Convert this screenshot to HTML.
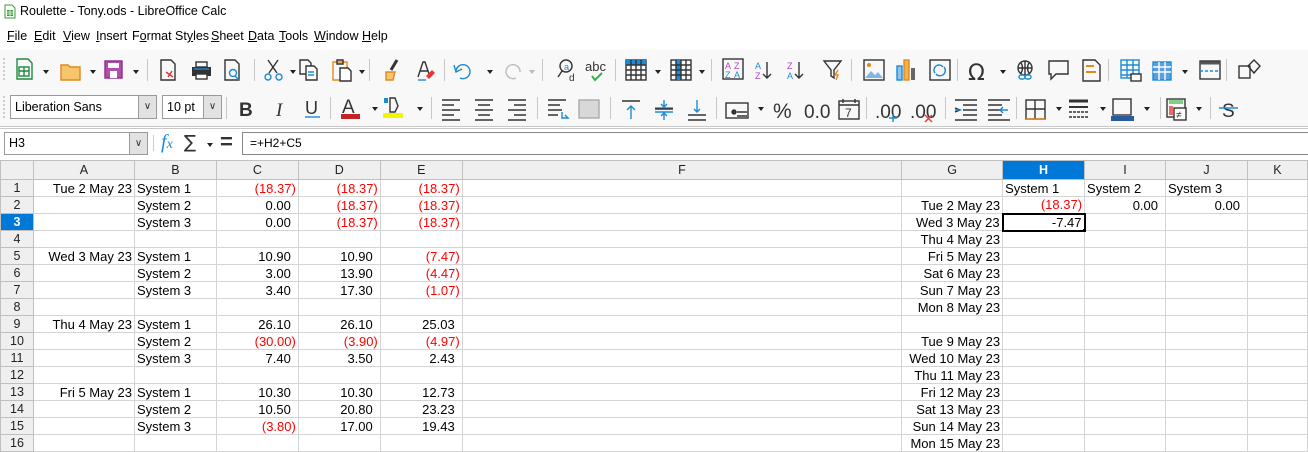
<!DOCTYPE html>
<html><head><meta charset="utf-8"><style>
*{margin:0;padding:0;box-sizing:border-box}
body{width:1308px;height:444px;overflow:hidden;background:#fff;font-family:"Liberation Sans",sans-serif;font-size:13px;color:#000;position:relative}
.abs{position:absolute}
#title{left:0;top:0;width:1308px;height:24px;background:#fff;font-family:"Liberation Sans",sans-serif;font-size:12.5px}
#menu{left:0;top:26px;height:22px;font-size:12.5px;font-family:"Liberation Sans",sans-serif}
#menu span{position:absolute;top:3px;white-space:nowrap}
#menu u{text-decoration:underline}
.tb{left:0;width:1308px;background:#f8f8f8}
.dd{position:absolute;width:0;height:0;border-left:3.5px solid transparent;border-right:3.5px solid transparent;border-top:4px solid #222}
.sep{position:absolute;width:1px;height:22px;background:#c8c8c8}
.box{position:absolute;background:#fff;border:1px solid #9a9a9a;height:24px;font-size:12.5px;line-height:22px;padding-left:4px}
.btn{position:absolute;right:0;top:0;width:18px;height:22px;background:#e2e2e2;border-left:1px solid #9a9a9a;font-size:10px;text-align:center;color:#333}
table{position:absolute;left:0;top:160px;border-collapse:collapse;table-layout:fixed;font-size:13px}
td{border:1px solid #d4d4d4;height:17px;line-height:15px;padding:0 2px;white-space:nowrap;overflow:hidden}
tr.h td{background:#efefef;text-align:center;color:#222;height:19px;border-color:#c0c0c0;font-size:12.5px}
td.rh{background:#efefef;text-align:center;color:#222;border-color:#c0c0c0;font-size:12.5px;padding:0}
.r{text-align:right}
.p{text-align:right;padding-right:7px}
.n{text-align:right;color:#f00}
.sel{background:#0078d7 !important;color:#fff !important;font-weight:bold}
</style></head><body>
<div id="title" class="abs">
<svg class="abs" style="left:4px;top:4px" width="12" height="15" viewBox="0 0 12 15"><path d="M1 1h7l3 3v10H1z" fill="#fff" stroke="#3a9a3a"/><rect x="3" y="6" width="6" height="6" fill="#3a9a3a"/><path d="M3 8h6M3 10h6M6 6v6" stroke="#fff" stroke-width=".7"/></svg>
<span class="abs" style="left:20px;top:4px">Roulette - Tony.ods - LibreOffice Calc</span></div>
<div id="menu" class="abs">
<span style="left:7px"><u>F</u>ile</span><span style="left:34px"><u>E</u>dit</span><span style="left:63px"><u>V</u>iew</span><span style="left:96px"><u>I</u>nsert</span><span style="left:132px">F<u>o</u>rmat</span><span style="left:175px">St<u>y</u>les</span><span style="left:211px"><u>S</u>heet</span><span style="left:248px"><u>D</u>ata</span><span style="left:279px"><u>T</u>ools</span><span style="left:314px"><u>W</u>indow</span><span style="left:362px"><u>H</u>elp</span></div>

<div class="abs tb" style="top:50px;height:38px">
<svg class="abs" style="left:0;top:0" width="1308" height="38" viewBox="0 0 1308 38" fill="none" stroke-width="1.4">
<path d="M4 8v22" stroke="#bbb" stroke-dasharray="2 2"/>
<g transform="translate(16,8)"><path d="M1 1h11l4 4v16H1z" stroke="#1e8a3e"/><rect x="3" y="9" width="10" height="9" stroke="#1e8a3e"/><path d="M3 13h10M8 9v9" stroke="#1e8a3e"/></g>
<g transform="translate(60,12)"><path d="M1 3h7l2 2h10v13H1z" fill="#f6c56c" stroke="#e08a1e"/></g>
<g transform="translate(104,10)"><rect x="1" y="1" width="17" height="17" fill="#b14fb1" stroke="#8a2c8a"/><rect x="4" y="3" width="11" height="5" fill="#fff"/><rect x="6" y="11" width="7" height="7" fill="#fff"/></g>
<g transform="translate(160,9)" stroke="#333"><path d="M1 1h10l4 4v16H1z"/><path d="M6 13l7 5M8 18l4-6" stroke="#d33"/></g>
<g transform="translate(191,11)"><rect x="1" y="6" width="19" height="9" fill="#333"/><rect x="5" y="1" width="11" height="5" stroke="#333"/><rect x="5" y="13" width="11" height="5" fill="#fff" stroke="#333"/><path d="M3 8h15" stroke="#1d8ad6"/></g>
<g transform="translate(224,9)" stroke="#333"><path d="M1 1h10l4 4v16H1z"/><circle cx="9" cy="14" r="3.5" stroke="#1d8ad6"/><path d="M11 17l4 4" stroke="#1d8ad6"/></g>
<g transform="translate(264,9)" stroke="#333"><path d="M4 1l9 13M14 1L5 14"/><circle cx="4" cy="18" r="3" stroke="#1d8ad6"/><circle cx="15" cy="18" r="3" stroke="#1d8ad6"/></g>
<g transform="translate(299,9)" stroke="#333"><path d="M1 1h8l3 3v11H1z"/><path d="M7 7h8l3 3v11H7z" fill="#fff"/><path d="M9 13h6M9 16h6" stroke="#1d8ad6"/></g>
<g transform="translate(332,9)"><path d="M1 3h14v18H1z" stroke="#e08a1e"/><path d="M5 1h6v4H5z" stroke="#333"/><path d="M8 9h8l3 3v10H8z" fill="#fff" stroke="#333"/></g>
<g transform="translate(383,9)"><path d="M14 1L8 11" stroke="#333" stroke-width="3"/><path d="M3 13h9l-2 8H3z" fill="#f6c56c" stroke="#e08a1e"/></g>
<g transform="translate(416,10)"><path d="M2 17L7 2h2l5 15M4 11h8" stroke="#333"/><path d="M2 20h8" stroke="#1d8ad6"/><path d="M10 16l6-6 3 3-6 6z" fill="#e33"/></g>
<path d="M456 22a7 7 0 1 1 4 6" stroke="#1d8ad6"/><path d="M454 15l2 7 6-3" stroke="#1d8ad6"/>
<path d="M520 22a7 7 0 1 0-4 6" stroke="#bbb"/>
<g transform="translate(557,8)" stroke="#333"><circle cx="9" cy="8" r="6"/><path d="M5 13l-4 6"/><text x="7" y="12" font-size="9" fill="#1d8ad6" stroke="none" font-family="Liberation Sans">a</text><text x="12" y="23" font-size="10" fill="#333" stroke="none" font-family="Liberation Sans">d</text></g>
<text x="585" y="21" font-size="13" fill="#333" font-family="Liberation Sans">abc</text><path d="M592 26l3 4 7-7" stroke="#2cb34a" stroke-width="2"/>
<g transform="translate(625,9)"><rect x="1" y="1" width="20" height="20" stroke="#333"/><rect x="1" y="1" width="20" height="5" fill="#1d8ad6"/><path d="M1 6h20M1 11h20M1 16h20M6 1v20M11 1v20M16 1v20" stroke="#333"/></g>
<g transform="translate(670,9)"><rect x="1" y="1" width="20" height="20" stroke="#333"/><rect x="6" y="1" width="5" height="20" fill="#1d8ad6"/><path d="M1 6h20M1 11h20M1 16h20M6 1v20M11 1v20M16 1v20" stroke="#333"/></g>
<g transform="translate(722,8)"><rect x="1" y="1" width="20" height="20" stroke="#333"/><text x="3" y="11" font-size="9" fill="#b040c0" font-family="Liberation Sans">A</text><text x="12" y="11" font-size="9" fill="#b040c0" font-family="Liberation Sans">Z</text><text x="3" y="20" font-size="9" fill="#1d8ad6" font-family="Liberation Sans">Z</text><text x="12" y="20" font-size="9" fill="#1d8ad6" font-family="Liberation Sans">A</text></g>
<text x="755" y="19" font-size="9" fill="#1d8ad6" font-family="Liberation Sans">A</text><text x="755" y="29" font-size="9" fill="#b040c0" font-family="Liberation Sans">Z</text><path d="M767 12v16M763 24l4 4 4-4" stroke="#333"/>
<text x="787" y="19" font-size="9" fill="#b040c0" font-family="Liberation Sans">Z</text><text x="787" y="29" font-size="9" fill="#1d8ad6" font-family="Liberation Sans">A</text><path d="M799 12v16M795 24l4 4 4-4" stroke="#333"/>
<path d="M824 11h17l-7 9v8l-3-2v-6z" stroke="#333"/><path d="M838 20l-3 5h3l-2 5" stroke="#e08a1e"/>
<g transform="translate(863,9)"><rect x="1" y="1" width="20" height="20" stroke="#333"/><path d="M2 19l6-7 4 4 3-3 5 6z" fill="#7fb8e6"/><circle cx="6" cy="6" r="2" fill="#e08a1e"/></g>
<rect x="897" y="16" width="5" height="14" fill="#8fc3ee" stroke="#1d8ad6"/><rect x="904" y="10" width="5" height="20" fill="#f6b04a" stroke="#e08a1e"/><rect x="911" y="18" width="4" height="12" fill="#666"/>
<g transform="translate(929,9)"><rect x="1" y="1" width="20" height="20" stroke="#333"/><path d="M6 14a5 5 0 0 1 8-6M15 8a5 5 0 0 1-8 7" stroke="#1d8ad6"/></g>
<text x="968" y="30" font-size="22" fill="#333" font-family="DejaVu Sans">Ω</text>
<g transform="translate(1015,9)" stroke="#333"><circle cx="10" cy="9" r="7"/><path d="M3 9h14M10 2v14M6 4c2 3 2 7 0 10M14 4c-2 3-2 7 0 10"/><rect x="4" y="16" width="6" height="4" rx="2" stroke="#1d8ad6"/><rect x="10" y="16" width="6" height="4" rx="2" stroke="#1d8ad6"/></g>
<path d="M1049 11h19v13h-12l-5 5v-5h-2z" stroke="#333"/>
<g transform="translate(1082,9)"><path d="M1 1h12l5 5v16H1z" stroke="#333"/><path d="M4 7h8M4 13h10" stroke="#e08a1e" stroke-width="2"/></g>
<g transform="translate(1120,9)"><rect x="1" y="1" width="18" height="18" stroke="#1d8ad6"/><path d="M1 6h18M1 11h18M1 16h18M7 1v18M13 1v18" stroke="#1d8ad6"/><rect x="11" y="15" width="10" height="7" fill="#fff" stroke="#333"/></g>
<g transform="translate(1152,9)"><rect x="1" y="3" width="18" height="18" fill="#5aa0e0" stroke="#1d8ad6"/><path d="M1 8h18M1 13h18M7 3v18M13 3v18" stroke="#fff"/></g>
<g transform="translate(1199,10)"><rect x="1" y="1" width="20" height="18" stroke="#333"/><path d="M1 3h20" stroke="#555" stroke-width="3"/><path d="M1 11h20" stroke="#1d8ad6" stroke-dasharray="3 2"/></g>
<g transform="translate(1238,9)" stroke="#333"><rect x="1" y="7" width="11" height="12"/><path d="M10 7l6-6 6 6-6 7z"/></g>
</svg>
<div class="dd" style="left:43px;top:20px"></div><div class="dd" style="left:90px;top:20px"></div><div class="dd" style="left:133px;top:20px"></div><div class="dd" style="left:290px;top:20px"></div><div class="dd" style="left:359px;top:20px"></div><div class="dd" style="left:487px;top:20px"></div><div class="dd" style="left:529px;top:20px;border-top-color:#bbb"></div><div class="dd" style="left:655px;top:20px"></div><div class="dd" style="left:699px;top:20px"></div><div class="dd" style="left:1000px;top:20px"></div><div class="dd" style="left:1182px;top:20px"></div>
<div class="sep" style="left:147px;top:9px"></div><div class="sep" style="left:254px;top:9px"></div><div class="sep" style="left:369px;top:9px"></div><div class="sep" style="left:444px;top:9px"></div><div class="sep" style="left:542px;top:9px"></div><div class="sep" style="left:615px;top:9px"></div><div class="sep" style="left:711px;top:9px"></div><div class="sep" style="left:851px;top:9px"></div><div class="sep" style="left:957px;top:9px"></div><div class="sep" style="left:1108px;top:9px"></div><div class="sep" style="left:1226px;top:9px"></div>
</div>

<div class="abs tb" style="top:88px;height:38px">
<svg class="abs" style="left:0;top:0" width="1308" height="38" viewBox="0 0 1308 38" fill="none" stroke-width="1.4">
<path d="M4 8v22" stroke="#bbb" stroke-dasharray="2 2"/>
<text x="239" y="28" font-size="19" font-weight="bold" fill="#333" font-family="Liberation Sans">B</text>
<text x="276" y="28" font-size="19" font-style="italic" fill="#333" font-family="Liberation Serif">I</text>
<text x="305" y="26" font-size="18" fill="#333" font-family="Liberation Sans">U</text><path d="M305 29h15" stroke="#1d8ad6"/>
<text x="342" y="25" font-size="19" fill="#333" font-family="Liberation Sans">A</text><rect x="341" y="26" width="19" height="5" fill="#c42424"/>
<g transform="translate(384,8)"><path d="M6 2h5l3 8-3 6H6z" stroke="#333"/><rect x="0" y="2" width="4" height="5" fill="#1d8ad6"/><rect x="-1" y="17" width="20" height="5" fill="#f5f500"/></g>
<path d="M442 12h18M442 17h12M442 22h18M442 27h12M442 32h18" stroke="#333"/>
<path d="M475 12h18M478 17h12M475 22h18M478 27h12M475 32h18" stroke="#333"/>
<path d="M508 12h18M514 17h12M508 22h18M514 27h12M508 32h18" stroke="#333"/>
<path d="M548 12h18M548 17h12M548 22h14M548 27h10" stroke="#333"/><path d="M562 24v6h6l-3-3" stroke="#1d8ad6"/>
<rect x="579" y="12" width="20" height="18" fill="#d8d8d8" stroke="#aaa"/>
<path d="M622 13h18" stroke="#333"/><path d="M631 31V18M627 22l4-4 4 4" stroke="#1d8ad6"/>
<path d="M655 20h18M655 24h18M664 12v7M661 16l3 3 3-3M664 32v-7M661 28l3-3 3 3" stroke="#1d8ad6"/><path d="M655 21h18" stroke="#333"/>
<path d="M688 27h18M688 32h18" stroke="#333"/><path d="M697 12v12M694 21l3 3 3-3" stroke="#1d8ad6"/>
<g transform="translate(725,12)" stroke="#333"><rect x="1" y="3" width="22" height="15"/><circle cx="9" cy="12" r="2" fill="#333"/><path d="M12 12h10M12 16h10"/></g>
<text x="773" y="30" font-size="21" fill="#333" font-family="Liberation Sans">%</text>
<text x="804" y="30" font-size="19" fill="#333" font-family="Liberation Sans">0.0</text>
<g transform="translate(838,10)" stroke="#333"><rect x="1" y="3" width="20" height="18"/><path d="M1 7h20M5 1v4M17 1v4"/><text x="7" y="19" font-size="12" fill="#333" stroke="none" font-family="Liberation Sans">7</text></g>
<text x="875" y="30" font-size="19" fill="#333" font-family="Liberation Sans">.00</text><path d="M889 30h8M893 26v8" stroke="#1d8ad6"/>
<text x="910" y="30" font-size="19" fill="#333" font-family="Liberation Sans">.00</text><path d="M925 27l7 7M932 27l-7 7" stroke="#e33"/>
<path d="M955 12h22M963 17h14M963 22h14M963 27h14M955 32h22M955 20l5 2-5 2" stroke="#333"/><path d="M955 22h6" stroke="#1d8ad6"/>
<path d="M988 12h22M988 17h14M988 22h14M988 27h14M988 32h22" stroke="#333"/><path d="M1008 22h-8M1003 19l-3 3 3 3" stroke="#1d8ad6"/>
<g transform="translate(1025,11)"><rect x="1" y="1" width="19" height="19" stroke="#333"/><path d="M10 1v19M1 10h19" stroke="#333"/><path d="M1 20h19" stroke="#e08a1e"/></g>
<path d="M1069 13h19" stroke="#333" stroke-width="3"/><path d="M1069 19h19" stroke="#333" stroke-width="2"/><path d="M1069 24h19M1069 29h19" stroke="#333" stroke-dasharray="3 1"/>
<rect x="1113" y="11" width="18" height="16" stroke="#333"/><rect x="1111" y="28" width="23" height="5" fill="#2a5aa0"/>
<g transform="translate(1166,10)"><rect x="1" y="1" width="18" height="18" stroke="#333"/><rect x="3" y="2" width="14" height="4" fill="#7fce8a"/><rect x="3" y="8" width="4" height="9" fill="#e86a6a"/><rect x="8" y="10" width="12" height="12" fill="#fff" stroke="#333"/><text x="10" y="20" font-size="10" fill="#333" font-family="Liberation Sans">≠</text></g>
<text x="1222" y="29" font-size="19" fill="#333" font-family="Liberation Sans">S</text><path d="M1219 20h19" stroke="#1d8ad6"/>
</svg>
<div class="box" style="left:10px;top:7px;width:147px">Liberation Sans<div class="btn">&#8744;</div></div>
<div class="box" style="left:162px;top:7px;width:60px">10 pt<div class="btn">&#8744;</div></div>
<div class="dd" style="left:372px;top:19px"></div><div class="dd" style="left:417px;top:19px"></div><div class="dd" style="left:758px;top:19px"></div><div class="dd" style="left:1056px;top:19px"></div><div class="dd" style="left:1100px;top:19px"></div><div class="dd" style="left:1144px;top:19px"></div><div class="dd" style="left:1196px;top:19px"></div>
<div class="sep" style="left:226px;top:9px"></div><div class="sep" style="left:330px;top:9px"></div><div class="sep" style="left:431px;top:9px"></div><div class="sep" style="left:537px;top:9px"></div><div class="sep" style="left:610px;top:9px"></div><div class="sep" style="left:716px;top:9px"></div><div class="sep" style="left:866px;top:9px"></div><div class="sep" style="left:945px;top:9px"></div><div class="sep" style="left:1016px;top:9px"></div><div class="sep" style="left:1160px;top:9px"></div><div class="sep" style="left:1210px;top:9px"></div>
</div>
<div class="abs" style="left:0;top:126px;width:1308px;height:1px;background:#c8c8c8"></div>
<div class="abs" style="left:0;top:128px;width:1308px;height:1px;background:#c8c8c8"></div>
<div class="box" style="left:4px;top:132px;width:144px;height:23px;line-height:21px">H3<div class="btn" style="height:21px">&#8744;</div></div>
<div class="abs" style="left:153px;top:135px;width:1px;height:16px;background:#ccc"></div>
<span class="abs" style="left:161px;top:131px;font-family:'Liberation Serif',serif;font-style:italic;font-size:20px;color:#1d8ad6">f<span style="font-size:14px">x</span></span>
<span class="abs" style="left:184px;top:132px;font-size:18px;color:#333;font-family:'DejaVu Sans',sans-serif">∑</span>
<div class="dd" style="left:207px;top:143px"></div>
<span class="abs" style="left:220px;top:129px;font-size:22px;font-weight:bold;color:#333">=</span>
<div class="box" style="left:242px;top:132px;width:1070px;height:23px;line-height:21px;border-color:#888;padding-left:7px;font-size:12px">=+H2+C5</div>

<table>
<colgroup><col style="width:33px"><col style="width:101px"><col style="width:82px"><col style="width:82px"><col style="width:82px"><col style="width:82px"><col style="width:440px"><col style="width:101px"><col style="width:82px"><col style="width:81px"><col style="width:82px"><col style="width:60px"></colgroup>
<tr class="h"><td></td><td>A</td><td>B</td><td>C</td><td>D</td><td>E</td><td>F</td><td>G</td><td class="sel">H</td><td>I</td><td>J</td><td>K</td></tr>
<tr><td class="rh">1</td><td class="r">Tue 2 May 23</td><td>System 1</td><td class="n">(18.37)</td><td class="n">(18.37)</td><td class="n">(18.37)</td><td></td><td></td><td>System 1</td><td>System 2</td><td>System 3</td><td></td></tr>
<tr><td class="rh">2</td><td></td><td>System 2</td><td class="p">0.00</td><td class="n">(18.37)</td><td class="n">(18.37)</td><td></td><td class="r">Tue 2 May 23</td><td class="n">(18.37)</td><td class="p">0.00</td><td class="p">0.00</td><td></td></tr>
<tr><td class="rh sel">3</td><td></td><td>System 3</td><td class="p">0.00</td><td class="n">(18.37)</td><td class="n">(18.37)</td><td></td><td class="r">Wed 3 May 23</td><td class="r" style="border:2px solid #000;position:relative">-7.47<div style="position:absolute;right:-4px;bottom:-4px;width:5px;height:5px;background:#000"></div></td><td></td><td></td><td></td></tr>
<tr><td class="rh">4</td><td></td><td></td><td></td><td></td><td></td><td></td><td class="r">Thu 4 May 23</td><td></td><td></td><td></td><td></td></tr>
<tr><td class="rh">5</td><td class="r">Wed 3 May 23</td><td>System 1</td><td class="p">10.90</td><td class="p">10.90</td><td class="n">(7.47)</td><td></td><td class="r">Fri 5 May 23</td><td></td><td></td><td></td><td></td></tr>
<tr><td class="rh">6</td><td></td><td>System 2</td><td class="p">3.00</td><td class="p">13.90</td><td class="n">(4.47)</td><td></td><td class="r">Sat 6 May 23</td><td></td><td></td><td></td><td></td></tr>
<tr><td class="rh">7</td><td></td><td>System 3</td><td class="p">3.40</td><td class="p">17.30</td><td class="n">(1.07)</td><td></td><td class="r">Sun 7 May 23</td><td></td><td></td><td></td><td></td></tr>
<tr><td class="rh">8</td><td></td><td></td><td></td><td></td><td></td><td></td><td class="r">Mon 8 May 23</td><td></td><td></td><td></td><td></td></tr>
<tr><td class="rh">9</td><td class="r">Thu 4 May 23</td><td>System 1</td><td class="p">26.10</td><td class="p">26.10</td><td class="p">25.03</td><td></td><td></td><td></td><td></td><td></td><td></td></tr>
<tr><td class="rh">10</td><td></td><td>System 2</td><td class="n">(30.00)</td><td class="n">(3.90)</td><td class="n">(4.97)</td><td></td><td class="r">Tue 9 May 23</td><td></td><td></td><td></td><td></td></tr>
<tr><td class="rh">11</td><td></td><td>System 3</td><td class="p">7.40</td><td class="p">3.50</td><td class="p">2.43</td><td></td><td class="r">Wed 10 May 23</td><td></td><td></td><td></td><td></td></tr>
<tr><td class="rh">12</td><td></td><td></td><td></td><td></td><td></td><td></td><td class="r">Thu 11 May 23</td><td></td><td></td><td></td><td></td></tr>
<tr><td class="rh">13</td><td class="r">Fri 5 May 23</td><td>System 1</td><td class="p">10.30</td><td class="p">10.30</td><td class="p">12.73</td><td></td><td class="r">Fri 12 May 23</td><td></td><td></td><td></td><td></td></tr>
<tr><td class="rh">14</td><td></td><td>System 2</td><td class="p">10.50</td><td class="p">20.80</td><td class="p">23.23</td><td></td><td class="r">Sat 13 May 23</td><td></td><td></td><td></td><td></td></tr>
<tr><td class="rh">15</td><td></td><td>System 3</td><td class="n">(3.80)</td><td class="p">17.00</td><td class="p">19.43</td><td></td><td class="r">Sun 14 May 23</td><td></td><td></td><td></td><td></td></tr>
<tr><td class="rh">16</td><td></td><td></td><td></td><td></td><td></td><td></td><td class="r">Mon 15 May 23</td><td></td><td></td><td></td><td></td></tr>
</table>
</body></html>
